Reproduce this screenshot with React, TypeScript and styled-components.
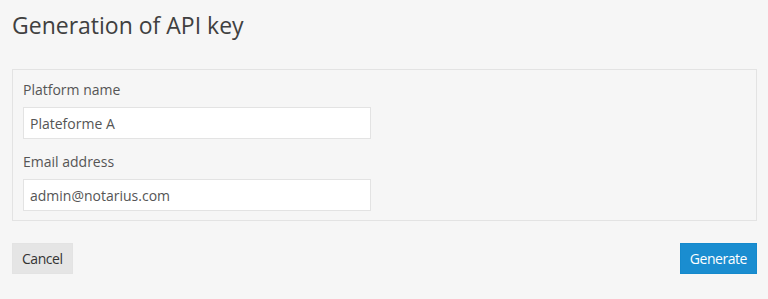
import styled, { createGlobalStyle } from "styled-components";

const GlobalStyle = createGlobalStyle`
  html, body {
    margin: 0;
    padding: 0;
    background-color: #f6f6f6;
    font-family: "Open Sans", "Liberation Sans", sans-serif;
    color: #555;
  }
`;

const Page = styled.div`
  padding: 10px 12px 0 12px;
  width: 745px;
`;

const Title = styled.h1`
  margin: 0 0 28px 0;
  font-size: 23px;
  line-height: 31px;
  font-weight: 400;
  color: #404040;
`;

const Panel = styled.div`
  border: 1px solid #e3e3e3;
  padding: 10px 10px 9px 10px;
  display: flex;
  flex-direction: column;
  gap: 13px;
`;

const Field = styled.div`
  display: flex;
  flex-direction: column;
  gap: 7px;
`;

const Label = styled.label`
  font-size: 14px;
  line-height: 20px;
  color: #555;
`;

const Input = styled.input`
  box-sizing: border-box;
  width: 348px;
  height: 32px;
  padding: 0 6px;
  border: 1px solid #e3e3e3;
  background: #fff;
  font-family: inherit;
  font-size: 14px;
  color: #555;
  outline: none;
`;

const Actions = styled.div`
  margin-top: 22px;
  display: flex;
  justify-content: space-between;
`;

const Button = styled.button<{ $primary?: boolean }>`
  box-sizing: border-box;
  height: 31px;
  padding: 0 9px;
  border: 1px solid ${(p) => (p.$primary ? "#1589cc" : "#e3e3e3")};
  background-color: ${(p) => (p.$primary ? "#1a8dd0" : "#e5e5e5")};
  color: ${(p) => (p.$primary ? "#fff" : "#333")};
  font-family: inherit;
  font-size: 14px;
  letter-spacing: -0.45px;
  cursor: pointer;
`;

function App() {
  return (
    <>
      <GlobalStyle />
      <Page>
        <Title>Generation of API key</Title>
        <Panel>
          <Field>
            <Label>Platform name</Label>
            <Input defaultValue="Plateforme A" />
          </Field>
          <Field>
            <Label>Email address</Label>
            <Input defaultValue="admin@notarius.com" />
          </Field>
        </Panel>
        <Actions>
          <Button>Cancel</Button>
          <Button $primary>Generate</Button>
        </Actions>
      </Page>
    </>
  );
}

export default App;
